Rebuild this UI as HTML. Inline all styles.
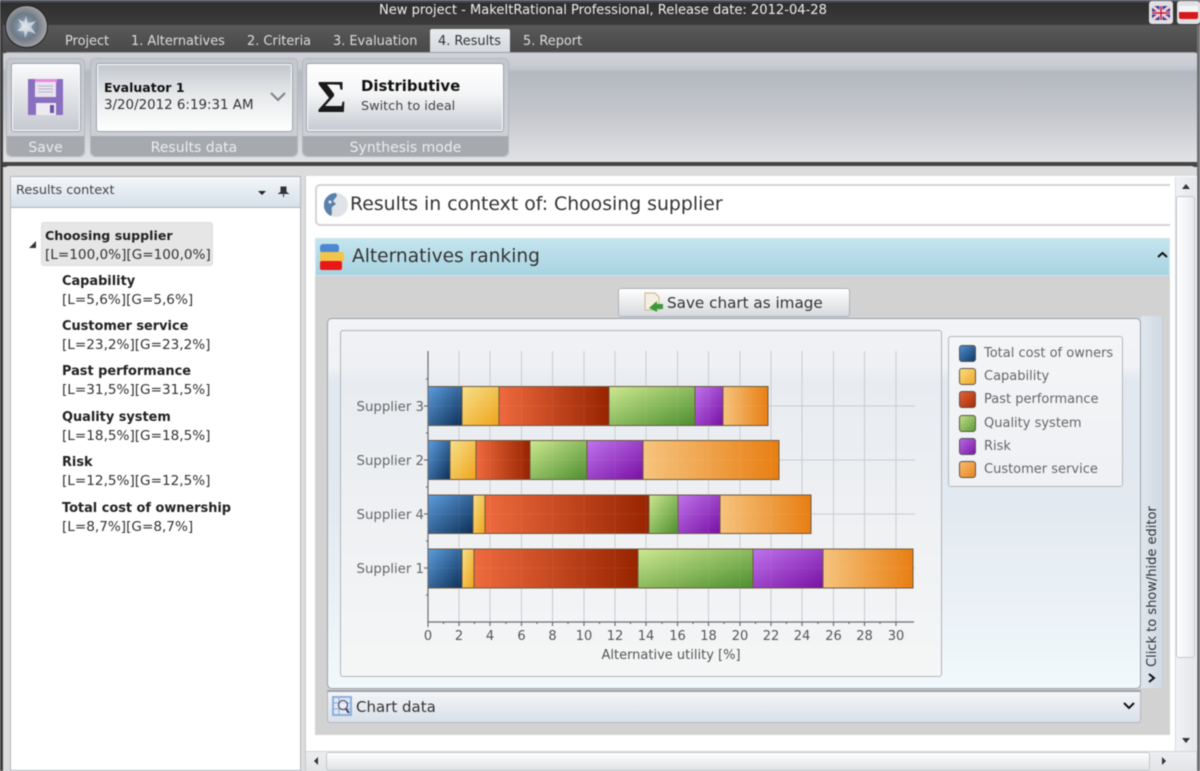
<!DOCTYPE html>
<html><head><meta charset="utf-8"><title>MakeItRational</title>
<style>
*{box-sizing:border-box}
html,body{margin:0;padding:0;width:1200px;height:771px;overflow:hidden;background:#dcdcdc}
#p{position:relative;width:1200px;height:771px;overflow:hidden;font-family:"DejaVu Sans","Liberation Sans",sans-serif;font-size:12.5px;color:#333;filter:blur(.55px)}
.a{position:absolute}
.t{position:absolute;white-space:nowrap}
.b{font-weight:bold;color:#222}
.tab{position:absolute;top:34px;color:#ddd;white-space:nowrap;font-size:12.9px}
.grp{position:absolute;top:58px;height:99px;border-radius:5px;background:linear-gradient(#c4c7cd,#d0d2d6);border:1px solid #b4b7bc}
.gl{position:absolute;left:0;right:0;bottom:0;height:20px;background:#a6a9ae;border-radius:0 0 5px 5px;color:#eceded;text-align:center;line-height:24px;font-size:14px;overflow:hidden}
.btn{position:absolute;top:63px;height:69px;border:1px solid #9aa3ad;border-radius:3px;box-shadow:inset 0 0 0 1px #fff}
.tr1{position:absolute;left:62px;white-space:nowrap;font-size:13.6px;line-height:18px;color:#333}
.tr1 b{display:block;color:#222;font-size:12.9px}
.lg{position:absolute;left:10px;width:17px;height:17px;border-radius:3px;border:1px solid #555}
.lt{position:absolute;left:35px;font-size:13px;color:#666;white-space:nowrap}
</style></head><body><div id="p">

<!-- title bar -->
<div class="a" style="left:0;top:0;width:1200px;height:25px;background:linear-gradient(#4a4d55 0,#4a4d55 2px,#2e2e2e 3px,#3d3d3d 100%)"></div>
<div class="a" style="left:0;top:25px;width:1200px;height:28px;background:linear-gradient(#595959,#484848)"></div>
<div class="t" style="left:379px;top:3px;color:#eee;font-size:13.07px">New project - MakeItRational Professional, Release date: 2012-04-28</div>
<div class="a" style="left:5px;top:5px;width:43px;height:43px;border-radius:50%;background:radial-gradient(circle at 45% 50%,#d0d8e0 0,#7c8fa3 24%,#6f7a86 42%,#a4a4a4 72%,#77736f 100%);border:1px solid #222"></div>
<svg class="a" style="left:5px;top:5px" width="43" height="43"><polygon points="21,11 23,18 31,16 26,22 31,29 23,26 20,33 19,26 12,26 17,21 13,14 19,17" fill="#e8ecf0" opacity=".7"/></svg>

<!-- flags -->
<div class="a" style="left:1149px;top:1px;width:24px;height:23px;background:#e0e0e4;border-radius:3px"></div>
<svg class="a" style="left:1152px;top:6px" width="18" height="14"><rect width="18" height="14" fill="#35389a"/><path d="M0 0L18 14M18 0L0 14" stroke="#ecc" stroke-width="3"/><path d="M9 0V14M0 7H18" stroke="#e8e8f0" stroke-width="3"/><path d="M9 0V14M0 7H18" stroke="#d01030" stroke-width="1.500"/></svg>
<div class="a" style="left:1177px;top:1px;width:23px;height:23px;background:#e0e0e4;border-radius:3px"></div>
<div class="a" style="left:1179px;top:6px;width:19px;height:7px;background:#f4f4f4"></div>
<div class="a" style="left:1179px;top:12px;width:19px;height:7px;background:#d81818;border-radius:0 0 2px 2px"></div>

<!-- tabs -->
<div class="tab" style="left:65px">Project</div>
<div class="tab" style="left:131px">1. Alternatives</div>
<div class="tab" style="left:247px">2. Criteria</div>
<div class="tab" style="left:333px">3. Evaluation</div>
<div class="a" style="left:430px;top:29px;width:80px;height:25px;background:linear-gradient(#e8ebee,#d4d8dd);border-radius:2px 2px 0 0"></div>
<div class="tab" style="left:438px;color:#333">4. Results</div>
<div class="tab" style="left:523px">5. Report</div>

<!-- ribbon -->
<div class="a" style="left:2px;top:52px;width:1198px;height:111px;border-radius:6px;background:linear-gradient(#d0d3d9 0,#c6c9d0 15px,#b4b8c0 19px,#c4c6cc 60px,#e2e3e5 100%);border-top:1px solid #9a9da2"></div>
<div class="grp" style="left:6px;width:79px"><div class="gl">Save</div></div>
<div class="grp" style="left:90px;width:208px"><div class="gl">Results data</div></div>
<div class="grp" style="left:302px;width:207px"><div class="gl">Synthesis mode</div></div>

<div class="btn" style="left:11px;width:70px;background:linear-gradient(#fbfbfc,#c4c9cf)"></div>
<svg class="a" style="left:27px;top:78px" width="37" height="38"><path d="M1 1H36V37H1Z" fill="#8a6fc0"/><rect x="8" y="1" width="22" height="3" fill="#e88ae0"/><rect x="8" y="4" width="21" height="15" fill="#e8e4ee"/><path d="M11 8H26M11 11H26M11 14H26" stroke="#b9aed0"/><rect x="9" y="25" width="20" height="12" fill="#eceaf0"/><rect x="23" y="27" width="4" height="8" fill="#6a55a0"/></svg>

<div class="btn" style="left:96px;width:197px;background:linear-gradient(#c2c7cd,#e6e8ea 45%,#fff)"></div>
<div class="t b" style="left:104px;top:80px;font-size:12.5px;color:#111">Evaluator 1</div>
<div class="t" style="left:104px;top:98px;font-size:13.4px;color:#333">3/20/2012 6:19:31 AM</div>
<svg class="a" style="left:269px;top:91px" width="18" height="12"><path d="M2 2L9 9L16 2" fill="none" stroke="#7b8188" stroke-width="2"/></svg>

<div class="btn" style="left:306px;width:198px;background:linear-gradient(#fff,#f4f5f6 45%,#c6cbd1)"></div>
<div class="t" style="left:317px;top:73px;font-size:45px;line-height:48px;font-family:'Liberation Serif',serif;color:#1a1a1a;font-weight:bold">Σ</div>
<div class="t b" style="left:361px;top:77px;font-size:14.9px;color:#111">Distributive</div>
<div class="t" style="left:361px;top:99px;font-size:12.8px;color:#444">Switch to ideal</div>

<!-- dark separator & sides -->
<div class="a" style="left:0;top:162px;width:1200px;height:5px;background:#444"></div>
<div class="a" style="left:0;top:25px;width:3px;height:746px;background:#3e3e3e"></div>
<div class="a" style="left:1197px;top:25px;width:3px;height:746px;background:#6e7074"></div>
<div class="a" style="left:3px;top:166px;width:1194px;height:605px;background:#dcdcdc;border-radius:6px 6px 0 0"></div>

<!-- left panel -->
<div class="a" style="left:10px;top:176px;width:291px;height:595px;background:#fff;border:1px solid #b2b8bf"></div>
<div class="a" style="left:11px;top:177px;width:289px;height:31px;background:linear-gradient(#f4f6f9,#d6e0ea);border-bottom:1px solid #aab4be"></div>
<div class="t" style="left:16px;top:183px;font-size:12.8px;color:#444">Results context</div>
<svg class="a" style="left:256px;top:186px" width="34" height="12"><path d="M2 5H10L6 9Z" fill="#222"/><path d="M25 1H30V6L32 7.500H23L25 6ZM27.500 7V11" fill="#333" stroke="#333"/></svg>
<svg class="a" style="left:28px;top:240px" width="9" height="9"><path d="M8 1V8H1Z" fill="#333"/></svg>
<div class="a" style="left:41px;top:222px;width:172px;height:44px;background:#e6e6e6;border:1px solid #ddd;border-radius:3px"></div>
<div class="t" style="left:45px;top:226px;font-size:13.6px;line-height:20px;color:#333"><b style="display:block;color:#222;line-height:19px;font-size:12.6px">Choosing supplier</b>[L=100,0%][G=100,0%]</div>
<div class="tr1" style="top:273px"><b>Capability</b>[L=5,6%][G=5,6%]</div>
<div class="tr1" style="top:318px"><b>Customer service</b>[L=23,2%][G=23,2%]</div>
<div class="tr1" style="top:363px"><b>Past performance</b>[L=31,5%][G=31,5%]</div>
<div class="tr1" style="top:409px"><b>Quality system</b>[L=18,5%][G=18,5%]</div>
<div class="tr1" style="top:454px"><b>Risk</b>[L=12,5%][G=12,5%]</div>
<div class="tr1" style="top:500px"><b>Total cost of ownership</b>[L=8,7%][G=8,7%]</div>

<!-- right panel -->
<div class="a" style="left:305px;top:176px;width:892px;height:595px;background:#fff;border-left:1px solid #c4c8cc"></div>
<div class="a" style="left:315px;top:184px;width:855px;height:42px;background:#fff;border:2px solid #d4d4d4;border-right:none;border-radius:5px 0 0 5px"></div>
<svg class="a" style="left:324px;top:193px" width="24" height="24"><circle cx="12" cy="12" r="12" fill="#dfe3e7"/><path d="M12 0A12 12 0 0 0 7 23C9 20 7 17 8 14L12 11L9 8L13 3Z" fill="#5a80ac"/><circle cx="6" cy="9" r="1.500" fill="#e8eef4"/></svg>
<div class="t" style="left:350px;top:194px;font-size:18.85px;color:#333">Results in context of: Choosing supplier</div>

<div class="a" style="left:315px;top:238px;width:855px;height:38px;background:linear-gradient(#c4e5ee,#a8d3e1);border:1px solid #cbe6ee"></div>
<div class="a" style="left:320px;top:244px;width:19px;height:9px;background:#4e86d0;border-radius:3px"></div>
<div class="a" style="left:320px;top:252px;width:24px;height:10px;background:#f2c44a;border-radius:2px"></div>
<div class="a" style="left:320px;top:261px;width:22px;height:9px;background:#e81818;border-radius:2px"></div>
<div class="t" style="left:352px;top:246px;font-size:18.6px;color:#333">Alternatives ranking</div>
<svg class="a" style="left:1156px;top:250px" width="13" height="10"><path d="M2 7L6.500 3L11 7" fill="none" stroke="#111" stroke-width="2"/></svg>

<div class="a" style="left:315px;top:276px;width:855px;height:459px;background:#d2d2d2"></div>

<div class="a" style="left:618px;top:288px;width:232px;height:29px;background:linear-gradient(#fff,#d6dade);border:1px solid #aeb2b8;border-radius:3px"></div>
<svg class="a" style="left:643px;top:292px" width="22" height="21"><path d="M2 1H12L16 5V18H2Z" fill="#f4efe0" stroke="#c8b890"/><path d="M6 16L14 9V12H20V17H14V20Z" fill="#3a9a3a"/></svg>
<div class="t" style="left:667px;top:294px;font-size:15.2px;color:#333">Save chart as image</div>

<!-- chart container -->
<div class="a" style="left:327px;top:318px;width:814px;height:371px;border:1px solid #9aa2aa;border-radius:5px;background:linear-gradient(#f2f4f6 0,#f0f2f5 48px,#e2e8ef 62px,#e2e9f0 50%,#f2f9fc 100%)"></div>
<div class="a" style="left:1141px;top:316px;width:22px;height:372px;background:linear-gradient(90deg,#dfe6ee,#d0dae4);border-right:1px solid #c8ced4"></div>
<div class="t" style="left:1145px;top:667px;transform-origin:0 0;transform:rotate(-90deg);font-size:13px;color:#333">Click to show/hide editor</div>
<svg class="a" style="left:1147px;top:672px" width="10" height="12"><path d="M2 2L7 6L2 10" fill="none" stroke="#111" stroke-width="2"/></svg>

<div class="a" style="left:340px;top:330px;width:602px;height:347px;border:1px solid #b0b4b8;border-radius:3px;background:linear-gradient(#f0f2f5 0,#eef0f3 36px,#e8ecf0 50px,#eef0f3 50%,#f5f6f6 100%)"></div>

<svg class="a" style="left:340px;top:330px" width="602" height="347" font-family="'DejaVu Sans','Liberation Sans',sans-serif" font-size="13" fill="#666">
<defs>
<linearGradient id="bl" x1="0" y1="0" x2="1" y2="1"><stop offset="0" stop-color="#5c9edf"/><stop offset="1" stop-color="#0d2e55"/></linearGradient>
<linearGradient id="ye" x1="0" y1="0" x2="1" y2="1"><stop offset="0" stop-color="#f6e08c"/><stop offset="1" stop-color="#f0a318"/></linearGradient>
<linearGradient id="re" x1="0" y1="0" x2="1" y2="0"><stop offset="0" stop-color="#ef6a3e"/><stop offset="1" stop-color="#972400"/></linearGradient>
<linearGradient id="gr" x1="0" y1="0" x2="1" y2="1"><stop offset="0" stop-color="#cde88f"/><stop offset="1" stop-color="#4d8e30"/></linearGradient>
<linearGradient id="pu" x1="0" y1="0" x2="1" y2="1"><stop offset="0" stop-color="#bf74ec"/><stop offset="1" stop-color="#7810a4"/></linearGradient>
<linearGradient id="or" x1="0" y1="0" x2="1" y2="0"><stop offset="0" stop-color="#f6c47e"/><stop offset="1" stop-color="#e87e12"/></linearGradient>
</defs>
<g stroke="#c8ccd0" stroke-width="1">
<path d="M119 21V292M150 21V292M181.500 21V292M212.500 21V292M244 21V292M275 21V292M306 21V292M337.500 21V292M368.500 21V292M400 21V292M431 21V292M462 21V292M493.500 21V292M524.500 21V292M556 21V292"/>
<path d="M88 76H575M88 130H575M88 184H575M88 238H575"/>
</g>
<g stroke-width="1">
<g stroke="#6d5a40">
<rect x="88" y="56.500" width="34" height="39" fill="url(#bl)"/><rect x="122" y="56.500" width="37" height="39" fill="url(#ye)"/><rect x="159" y="56.500" width="110" height="39" fill="url(#re)"/><rect x="269" y="56.500" width="86" height="39" fill="url(#gr)"/><rect x="355" y="56.500" width="28" height="39" fill="url(#pu)"/><rect x="383" y="56.500" width="45" height="39" fill="url(#or)"/>
<rect x="88" y="110.500" width="22" height="39" fill="url(#bl)"/><rect x="110" y="110.500" width="26" height="39" fill="url(#ye)"/><rect x="136" y="110.500" width="54" height="39" fill="url(#re)"/><rect x="190" y="110.500" width="57" height="39" fill="url(#gr)"/><rect x="247" y="110.500" width="56" height="39" fill="url(#pu)"/><rect x="303" y="110.500" width="136" height="39" fill="url(#or)"/>
<rect x="88" y="165" width="45" height="38.500" fill="url(#bl)"/><rect x="133" y="165" width="12" height="38.500" fill="url(#ye)"/><rect x="145" y="165" width="164" height="38.500" fill="url(#re)"/><rect x="309" y="165" width="29" height="38.500" fill="url(#gr)"/><rect x="338" y="165" width="42" height="38.500" fill="url(#pu)"/><rect x="380" y="165" width="91" height="38.500" fill="url(#or)"/>
<rect x="88" y="219" width="34" height="39" fill="url(#bl)"/><rect x="122" y="219" width="12" height="39" fill="url(#ye)"/><rect x="134" y="219" width="164" height="39" fill="url(#re)"/><rect x="298" y="219" width="115" height="39" fill="url(#gr)"/><rect x="413" y="219" width="70" height="39" fill="url(#pu)"/><rect x="483" y="219" width="90" height="39" fill="url(#or)"/>
</g></g>
<g stroke="#fff" stroke-opacity=".06" stroke-width="1"><path d="M119 56V258M150 56V258M181.500 56V258M212.500 56V258M244 56V258M275 56V258M306 56V258M337.500 56V258M368.500 56V258M400 56V258M431 56V258M88 76H429M88 130H439M88 184H471M88 238H573"/></g>
<g stroke="#6a6e74" stroke-width="1.200" fill="none">
<path d="M88 21V292H574"/>
<path d="M84 76H88M84 130H88M84 184H88M84 238H88M86 49H88M86 103H88M86 157H88M86 211H88M86 265H88"/>
<path d="M88 292V297M119 292V296M150 292V296M181.500 292V296M212.500 292V296M244 292V296M275 292V296M306 292V296M337.500 292V296M368.500 292V296M400 292V296M431 292V296M462 292V296M493.500 292V296M524.500 292V296M556 292V296"/>
<path d="M103.500 292V294M134.500 292V294M166 292V294M197 292V294M228 292V294M259.500 292V294M290.500 292V294M322 292V294M353 292V294M384 292V294M415.500 292V294M446.500 292V294M478 292V294M509 292V294M540 292V294"/>
</g>
<g text-anchor="end" font-size="13.300"><text x="84" y="81">Supplier 3</text><text x="84" y="135">Supplier 2</text><text x="84" y="189">Supplier 4</text><text x="84" y="243">Supplier 1</text></g>
<g text-anchor="middle" fill="#555"><text x="88" y="310">0</text><text x="119" y="310">2</text><text x="150" y="310">4</text><text x="181.500" y="310">6</text><text x="212.500" y="310">8</text><text x="244" y="310">10</text><text x="275" y="310">12</text><text x="306" y="310">14</text><text x="337.500" y="310">16</text><text x="368.500" y="310">18</text><text x="400" y="310">20</text><text x="431" y="310">22</text><text x="462" y="310">24</text><text x="493.500" y="310">26</text><text x="524.500" y="310">28</text><text x="556" y="310">30</text>
<text x="331" y="329">Alternative utility [%]</text></g>
</svg>

<!-- legend -->
<div class="a" style="left:948px;top:336px;width:175px;height:151px;background:linear-gradient(#f4f5f7,#eff1f4);border:1px solid #b4b8bc;border-radius:3px">
<div class="lg" style="top:8px;background:linear-gradient(135deg,#4f8dcc,#123a68)"></div><div class="lt" style="top:9px">Total cost of owners</div>
<div class="lg" style="top:31px;background:linear-gradient(135deg,#f8dc80,#f0a82a)"></div><div class="lt" style="top:32px">Capability</div>
<div class="lg" style="top:54px;background:linear-gradient(135deg,#e66038,#a42c08)"></div><div class="lt" style="top:55px">Past performance</div>
<div class="lg" style="top:78px;background:linear-gradient(135deg,#c0e084,#5e9a3a)"></div><div class="lt" style="top:79px">Quality system</div>
<div class="lg" style="top:101px;background:linear-gradient(135deg,#b868e4,#7c18a8)"></div><div class="lt" style="top:102px">Risk</div>
<div class="lg" style="top:124px;background:linear-gradient(135deg,#f6bc70,#e8861e)"></div><div class="lt" style="top:125px">Customer service</div>
</div>

<!-- chart data -->
<div class="a" style="left:327px;top:690px;width:814px;height:33px;background:linear-gradient(#f4f5f7,#d8e0ea);border:1px solid #b0b8c0;border-top:2px solid #9aa2aa;border-radius:0 0 3px 3px"></div>
<svg class="a" style="left:332px;top:696px" width="20" height="20"><rect width="20" height="20" fill="#8ab0dc"/><rect x="2" y="2" width="16" height="16" fill="#dfe8f2"/><path d="M2 7H18M2 13H18M7 2V18" stroke="#8aa8cc"/><circle cx="11" cy="9" r="4.500" fill="#eef3f8" fill-opacity=".7" stroke="#557" stroke-width="1.300"/><path d="M14 13L17 17" stroke="#446" stroke-width="2"/></svg>
<div class="t" style="left:356px;top:698px;font-size:15px;color:#333">Chart data</div>
<svg class="a" style="left:1122px;top:701px" width="14" height="10"><path d="M2 2L7 7L12 2" fill="none" stroke="#111" stroke-width="2"/></svg>

<!-- vertical scrollbar -->
<div class="a" style="left:1175px;top:177px;width:21px;height:594px;background:linear-gradient(90deg,#f0f2f4,#e4e6e9);border-left:1px solid #d8dade"></div>
<svg class="a" style="left:1181px;top:182px" width="10" height="8"><path d="M1 7H9L5 2Z" fill="#333"/></svg>
<div class="a" style="left:1176px;top:196px;width:19px;height:462px;background:linear-gradient(90deg,#fff,#e8ebee);border:1px solid #c4c8cc;border-radius:3px"></div>
<svg class="a" style="left:1181px;top:737px" width="10" height="8"><path d="M1 1H9L5 6Z" fill="#333"/></svg>

<!-- horizontal scrollbar -->
<div class="a" style="left:306px;top:751px;width:891px;height:20px;background:linear-gradient(#eceef0,#e2e4e7);border-top:1px solid #d4d6da"></div>
<svg class="a" style="left:312px;top:756px" width="8" height="10"><path d="M6 1V9L2 5Z" fill="#333"/></svg>
<div class="a" style="left:326px;top:752px;width:824px;height:19px;background:linear-gradient(#fff,#dfe2e6);border:1px solid #c4c8cc;border-radius:3px"></div>
<svg class="a" style="left:1160px;top:756px" width="8" height="10"><path d="M2 1V9L6 5Z" fill="#333"/></svg>

</div></body></html>
